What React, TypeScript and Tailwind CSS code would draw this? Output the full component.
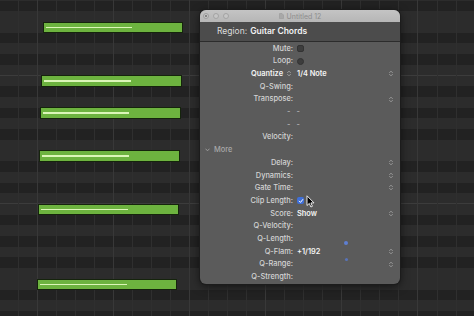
import React from "react";

const keys: boolean[] = [
  // true = black key; from G4 downward
  false, true, false, false, true, false, true, false, false, true, false, true, false, true, false,
  false, true, false, true, false, false, true, false, true, false, true, false, false, true, false, true,
];
// rows with a separator line at their bottom (B/C boundary)
const octaveLines = new Set([7, 19]);

const notes: Record<number, { x: number; w: number; line: number }> = {
  3: { x: 43, w: 140, line: 86 },
  8: { x: 41, w: 141, line: 87 },
  11: { x: 40, w: 141, line: 86 },
  15: { x: 39, w: 141, line: 87 },
  20: { x: 38, w: 141, line: 87 },
  27: { x: 37, w: 140, line: 87 },
};

function UpDown({ className = "" }: { className?: string }) {
  return (
    <svg width="4" height="7" viewBox="0 0 4 7" className={className}>
      <path d="M0.6 2.6 L2 1.2 L3.4 2.6" fill="none" stroke="currentColor" strokeWidth="0.8" strokeLinecap="round" strokeLinejoin="round" />
      <path d="M0.6 4.4 L2 5.8 L3.4 4.4" fill="none" stroke="currentColor" strokeWidth="0.8" strokeLinecap="round" strokeLinejoin="round" />
    </svg>
  );
}

type Row = {
  label?: string;
  value?: React.ReactNode;
  chevron?: boolean;
  kind?: "quantize" | "dash" | "more";
};

const rows: Row[] = [
  { label: "Mute:", value: <span className="block w-[7px] h-[7px] rounded-[2px] bg-[#3d3d3d] border border-[#333]" /> },
  { label: "Loop:", value: <span className="block w-[7px] h-[7px] rounded-full bg-[#3d3d3d] border border-[#333]" /> },
  { kind: "quantize", value: "1/4 Note", chevron: true },
  { label: "Q-Swing:" },
  { label: "Transpose:", chevron: true },
  { kind: "dash" },
  { kind: "dash" },
  { label: "Velocity:" },
  { kind: "more" },
  { label: "Delay:", chevron: true },
  { label: "Dynamics:", chevron: true },
  { label: "Gate Time:", chevron: true },
  {
    label: "Clip Length:",
    value: (
      <span className="flex items-center justify-center w-[7px] h-[7px] rounded-[2px] bg-[#3f6fd8]">
        <svg width="6" height="6" viewBox="0 0 6 6">
          <path d="M1.2 3.1 L2.5 4.4 L4.8 1.5" fill="none" stroke="white" strokeWidth="1" strokeLinecap="round" strokeLinejoin="round" />
        </svg>
      </span>
    ),
  },
  { label: "Score:", value: "Show", chevron: true },
  { label: "Q-Velocity:" },
  { label: "Q-Length:" },
  { label: "Q-Flam:", value: "+1/192", chevron: true },
  { label: "Q-Range:", chevron: true },
  { label: "Q-Strength:" },
];

export default function App() {
  return (
    <div
      className="relative w-[474px] h-[316px] overflow-hidden bg-[#232323]"
      style={{ fontFamily: "Inter, 'Liberation Sans', Arial, sans-serif" }}
    >
      {/* piano roll stripes */}
      <div className="flex flex-col mt-[-10.1px]">
        {keys.map((black, i) => (
          <div
            key={i}
            className={`relative h-[10.71px] shrink-0 ${black ? "bg-[#222222]" : "bg-[#2c2c2c]"}`}
          >
            {octaveLines.has(i) && <div className="absolute left-0 right-0 bottom-0 h-px bg-[#3c3c3c]" />}
          </div>
        ))}
      </div>

      {/* vertical grid lines */}
      <div className="absolute inset-0 flex pl-[17.5px] pointer-events-none">
        {Array.from({ length: 25 }).map((_, i) => (
          <div
            key={i}
            className={`w-[19.05px] shrink-0 h-full border-l ${(i - 1) % 4 === 0 ? "border-[#383838]" : "border-[#2f2f2f]"}`}
          />
        ))}
      </div>

      {/* notes layer */}
      <div className="absolute inset-0 flex flex-col mt-[-10.1px]">
        {keys.map((_, i) => (
          <div key={i} className="relative h-[10.71px] shrink-0">
            {notes[i] && (
              <div
                className="absolute top-[-0.2px] h-[11.3px] bg-[#6db33f] border border-[#15240c] flex items-center"
                style={{ left: notes[i].x, width: notes[i].w }}
              >
                <div className="ml-[1.5px] h-[1.6px] bg-[#dcf6b8]" style={{ width: notes[i].line }} />
              </div>
            )}
          </div>
        ))}
      </div>

      {/* region inspector window */}
      <div className="absolute left-[200px] top-[10px] w-[200px] rounded-[6px] overflow-hidden bg-[#5b5b5b] shadow-[0_2px_10px_rgba(0,0,0,0.6)] ring-1 ring-[#1c1c1c]">
        {/* title bar */}
        <div className="relative h-[12px] bg-[linear-gradient(#c4c4c4,#b6b6b6)] flex items-center">
          <div className="flex items-center gap-[4px] pl-[3px]">
            <span className="flex items-center justify-center w-[6px] h-[6px] rounded-full border border-[#9d9d9d] bg-[#c8c8c8]">
              <span className="w-[2px] h-[2px] rounded-full bg-[#6f6f6f]" />
            </span>
            <span className="w-[6px] h-[6px] rounded-full border border-[#a3a3a3] bg-[#c6c6c6]" />
            <span className="w-[6px] h-[6px] rounded-full border border-[#a3a3a3] bg-[#c6c6c6]" />
          </div>
          <div className="absolute inset-0 flex items-center justify-center gap-[3px]">
            <svg width="5" height="6" viewBox="0 0 5 6">
              <path d="M0.5 0.5 H3 L4.5 2 V5.5 H0.5 Z" fill="#a8a8a8" stroke="#959595" strokeWidth="0.5" />
            </svg>
            <span className="text-[7px] leading-none text-[#8d8d8d]">Untitled 12</span>
          </div>
        </div>

        {/* header */}
        <div className="h-[20px] bg-[#4c4c4c] border-b border-[#2c2c2c] flex items-center pl-[17px]">
          <span className="text-[8.5px] leading-none text-[#dcdcdc]">Region:</span>
          <span className="ml-[3px] text-[8.5px] leading-none font-semibold text-[#f2f2f2]">Guitar Chords</span>
        </div>

        {/* rows */}
        <div className="relative flex flex-col text-[7.4px] leading-none pb-[0.5px]">
          {rows.map((r, i) => {
            if (r.kind === "more") {
              return (
                <div key={i} className="h-[12.7px] flex items-center pl-[5px] text-[#a9a9a9] font-medium">
                  <svg width="5" height="4" viewBox="0 0 5 4" className="mr-[4px]">
                    <path d="M0.8 1 L2.5 2.8 L4.2 1" fill="none" stroke="currentColor" strokeWidth="0.8" strokeLinecap="round" strokeLinejoin="round" />
                  </svg>
                  <span>More</span>
                </div>
              );
            }
            return (
              <div key={i} className="h-[12.7px] flex items-center">
                <div className="w-[93px] flex items-center justify-end shrink-0">
                  {r.kind === "quantize" ? (
                    <>
                      <span className="font-semibold text-[#f2f2f2]">Quantize</span>
                      <UpDown className="ml-[4px] mr-[2px] text-[#b5b5b5]" />
                    </>
                  ) : r.kind === "dash" ? (
                    <span className="mr-[-9px] text-[#c8c8c8] tracking-[2px]">- -</span>
                  ) : (
                    <span className="font-medium text-[#d4d4d4]">{r.label}</span>
                  )}
                </div>
                <div className="ml-[4px] flex-1 flex items-center font-semibold text-[#f4f4f4]">{r.value}</div>
                {r.chevron && <UpDown className="mr-[7px] text-[#a9a9a9]" />}
              </div>
            );
          })}

          {/* blue indicator dots */}
          <span className="absolute left-[144px] top-[199px] w-[4px] h-[4px] rounded-full bg-[#5e7fd2]" />
          <span className="absolute left-[145px] top-[216px] w-[3px] h-[3px] rounded-full bg-[#5873b8]" />

          {/* mouse cursor */}
          <svg className="absolute left-[106px] top-[153px]" width="9" height="13" viewBox="0 0 9 13">
            <path d="M1 0.8 L1 10.5 L3.3 8.4 L4.9 12 L6.4 11.3 L4.9 7.9 L8 7.9 Z" fill="black" stroke="white" strokeWidth="0.9" strokeLinejoin="round" />
          </svg>
        </div>
      </div>
    </div>
  );
}
